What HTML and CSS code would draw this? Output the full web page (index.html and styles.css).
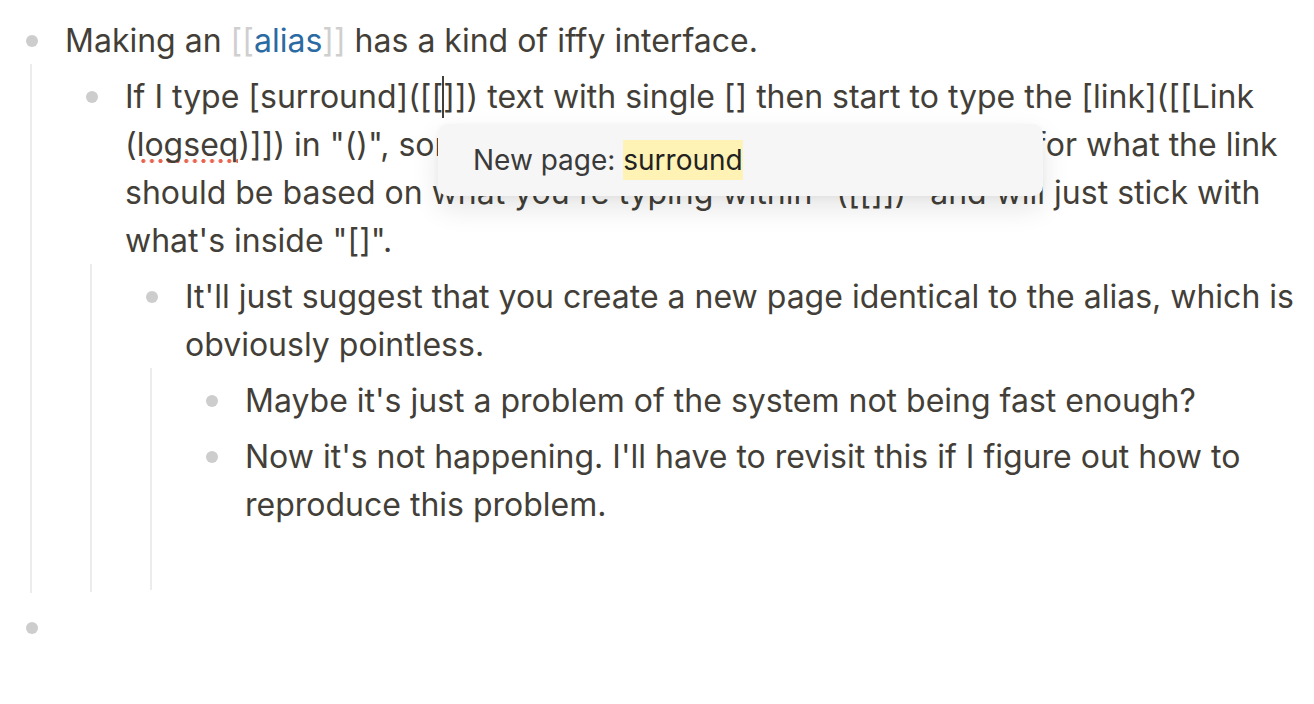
FILE: index.html
```html
<!DOCTYPE html>
<html>
<head>
<meta charset="utf-8">
<link rel="stylesheet" href="styles.css">
</head>
<body>
<div class="page">
  <div class="block">
    <div class="row">
      <div class="bullet-wrap"><span class="bullet"></span></div>
      <div class="content">Making an <span class="br">[[</span><span class="link">alias</span><span class="br">]]</span> has a kind of iffy interface.</div>
    </div>
    <div class="children c1">
      <div class="block">
        <div class="row">
          <div class="bullet-wrap"><span class="bullet"></span></div>
          <div class="content">If I type [surround]([[<span class="caret"></span>]]) text with single [] then start to type the [link]([[Link (<span class="spell">logseq</span>)]]) in "()", so<span class="covered">metimes Logseq won't suggest anything f</span>or what the link should be based on what you're typing within "([[]])" and will just stick with what's inside "[]".</div>
        </div>
        <div class="children c2">
          <div class="block">
            <div class="row">
              <div class="bullet-wrap"><span class="bullet"></span></div>
              <div class="content">It'll just suggest that you create a new page identical to the alias, which is obviously pointless.</div>
            </div>
            <div class="children c3">
              <div class="block">
                <div class="row">
                  <div class="bullet-wrap"><span class="bullet"></span></div>
                  <div class="content">Maybe it's just a problem of the system not being fast enough?</div>
                </div>
              </div>
              <div class="block">
                <div class="row">
                  <div class="bullet-wrap"><span class="bullet"></span></div>
                  <div class="content">Now it's not happening. I'll have to revisit this if I figure out how to reproduce this problem.</div>
                </div>
              </div>
            </div>
          </div>
        </div>
      </div>
    </div>
  </div>
  <div class="block last">
    <div class="row">
      <div class="bullet-wrap"><span class="bullet"></span></div>
      <div class="content"></div>
    </div>
  </div>
</div>
<div class="popup">
  <div class="popup-item">New page: <span class="hl">surround</span></div>
</div>
</body>
</html>
```
FILE: styles.css
```css
html, body {
  margin: 0;
  padding: 0;
  background: #ffffff;
}
body {
  font-family: Inter, "Noto Sans", sans-serif;
  color: #433f38;
  font-size: 32px;
  line-height: 48px;
  width: 1314px;
  height: 704px;
  overflow: hidden;
  position: relative;
}
.page {
  padding: 13px 0 0 17px;
}
.row {
  display: flex;
  align-items: flex-start;
  padding: 4px 0;
}
.bullet-wrap {
  flex: 0 0 30px;
  height: 48px;
  display: flex;
  align-items: center;
  justify-content: center;
  margin-right: 18px;
}
.bullet {
  width: 12px;
  height: 12px;
  border-radius: 50%;
  background: #cdcdcd;
}
.content {
  flex: 1;
  min-height: 48px;
  padding-right: 8px;
}
.children {
  margin-top: -5px;
  padding-top: 5px;
  margin-left: 13px;
  border-left: 2px solid #ececec;
  padding-left: 45px;
}
.c1 { padding-bottom: 1px; }
.c2 { padding-bottom: 2px; }
.c3 { padding-bottom: 57px; }
.last { margin-top: 7px; }
.br { color: #cfcfcf; }
.link { color: #2b6aa3; }
.caret {
  display: inline-block;
  width: 2px;
  height: 42px;
  background: #433f38;
  vertical-align: -10px;
  margin: 0 -1px;
}
.covered {
  letter-spacing: -0.55px;
}
.spell {
  background-image: radial-gradient(circle at center, #e9634f 0, #e9634f 1.7px, rgba(233, 99, 79, 0) 2.4px);
  background-size: 8.6px 6px;
  background-repeat: repeat-x;
  background-position: 2px 100%;
}
.popup {
  position: absolute;
  left: 438px;
  top: 124px;
  width: 605px;
  height: 72px;
  background: #f6f6f6;
  border-radius: 10px;
  box-shadow: 0 12px 28px rgba(0, 0, 0, 0.10), 0 2px 6px rgba(0, 0, 0, 0.04);
}
.popup-item {
  padding: 12px 0 0 35px;
  font-size: 28px;
  line-height: 48px;
  color: #3a3a3a;
}
.hl {
  background: #fef3b4;
  color: #222;
  padding: 3px 0;
}
```
